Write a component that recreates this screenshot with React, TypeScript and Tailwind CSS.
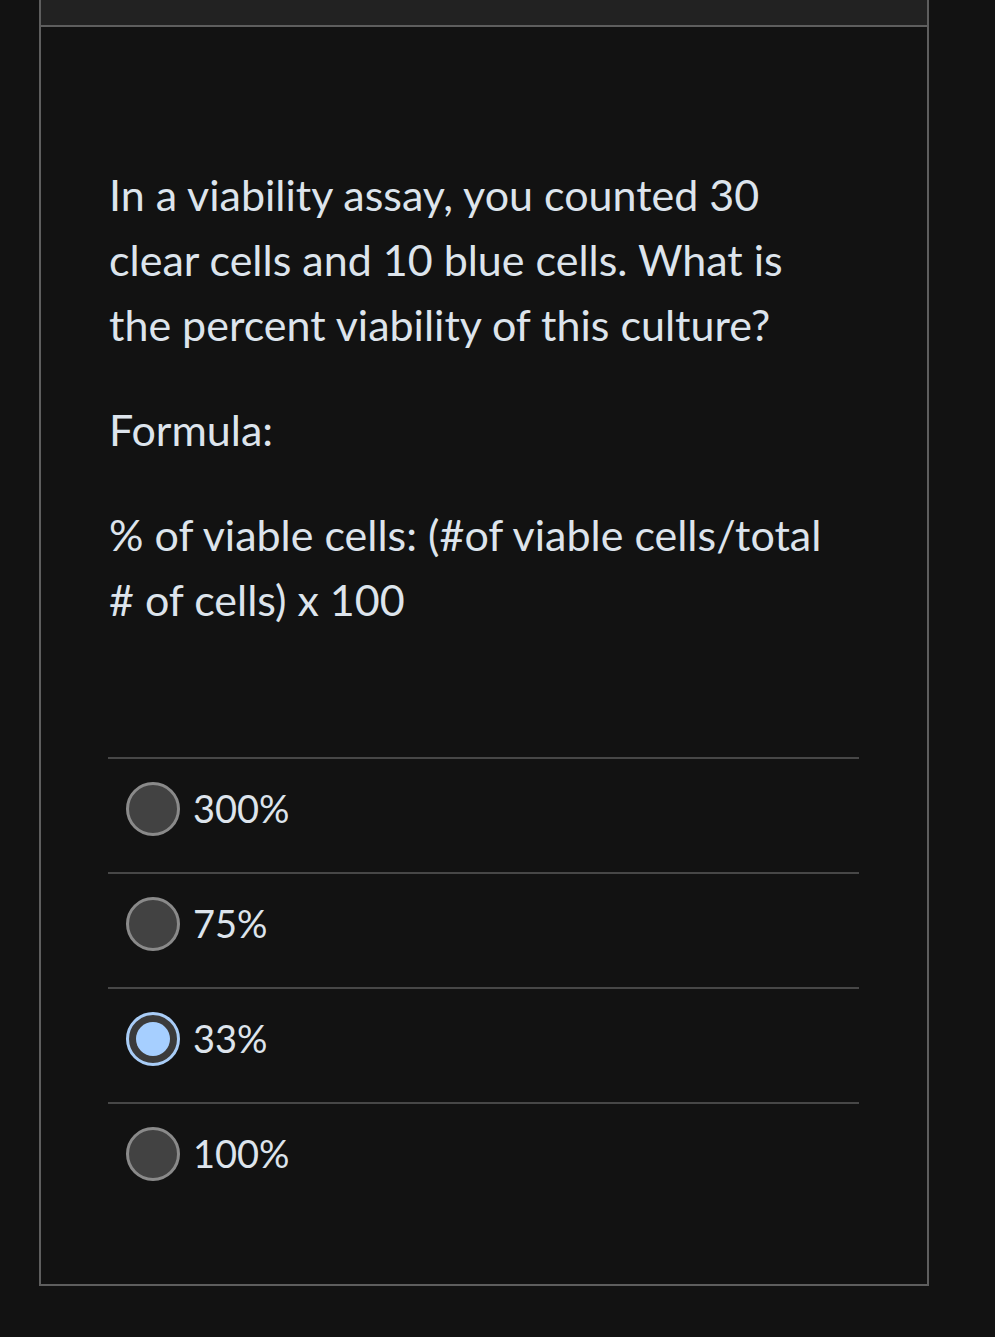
const options = [
  { label: '300%', checked: false },
  { label: '75%', checked: false },
  { label: '33%', checked: true },
  { label: '100%', checked: false },
]

function Radio({ checked }: { checked: boolean }) {
  if (checked) {
    return (
      <span className="flex h-[54px] w-[54px] shrink-0 items-center justify-center rounded-full border-[3px] border-[#a9cdf7] bg-[#3b3b3b]">
        <span className="h-[34px] w-[34px] rounded-full bg-[#a6cfff]" />
      </span>
    )
  }
  return <span className="h-[54px] w-[54px] shrink-0 rounded-full border-[3px] border-[#8a8a8a] bg-[#424242]" />
}

export default function App() {
  return (
    <div className="min-h-[1337px] bg-[#121212] font-['Lato','Noto_Sans',sans-serif] text-[#dde4ec]">
      <div className="ml-[39px] w-[890px] border-x-2 border-b-2 border-[#5e5e5e]">
        <div className="h-[27px] border-b-2 border-[#5e5e5e] bg-[#222222]" />
        <div className="pb-[67px] pl-[67px] pt-[135px]">
          <div className="w-[725px] pl-px text-[43px] leading-[65px]">
            <p>In a viability assay, you counted 30 clear cells and 10 blue cells. What is the percent viability of this culture?</p>
            <p className="mt-[40px]">Formula:</p>
            <p className="mt-[40px]">% of viable cells: (#of viable cells/total # of cells) x 100</p>
          </div>
          <div className="mt-[125px] w-[751px]">
            {options.map((o) => (
              <div key={o.label} className="flex h-[115px] items-center gap-[13px] border-t-2 border-[#474747] pb-[14px] pl-[18px]">
                <Radio checked={o.checked} />
                <span className="text-[38px]">{o.label}</span>
              </div>
            ))}
          </div>
        </div>
      </div>
    </div>
  )
}
